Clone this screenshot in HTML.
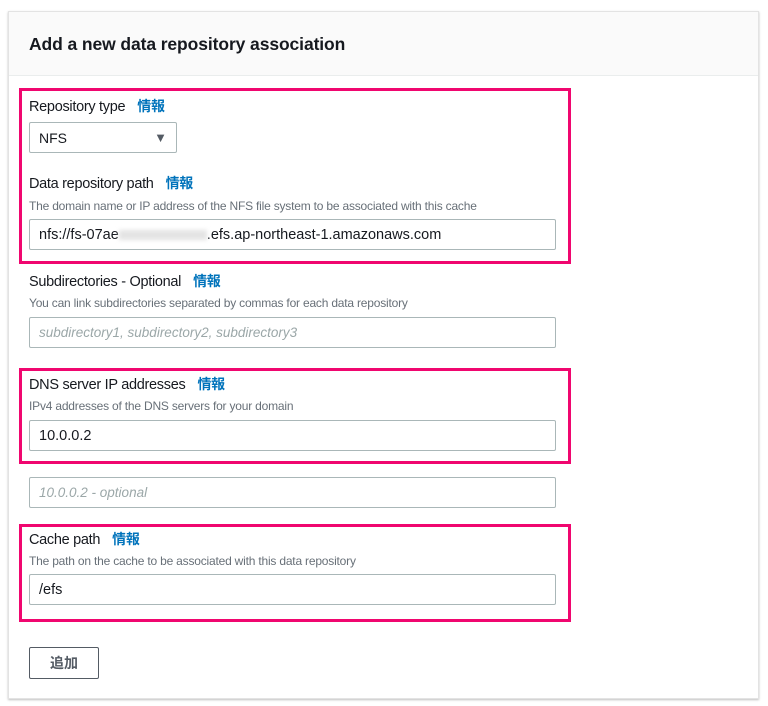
<!DOCTYPE html>
<html><head><meta charset="utf-8"><style>
*{box-sizing:border-box;margin:0;padding:0}
body{width:768px;height:706px;background:#fff;font-family:"Liberation Sans","Noto Sans CJK JP",sans-serif;color:#16191f;position:relative;overflow:hidden}
.card{position:absolute;left:8px;top:11px;width:751px;height:688px;background:#fff;border:1px solid #e3e3e3;box-shadow:0 1px 2px rgba(0,0,0,.25)}
.hdr{position:absolute;left:0;top:0;right:0;height:64px;background:#fafafa;border-bottom:1px solid #eaeded}
.hdr h1{position:absolute;left:20px;top:22px;font-size:17.5px;font-weight:bold;letter-spacing:-.1px}
.a{position:absolute}
.lbl{font-size:14.5px;letter-spacing:-.3px}
.lbl b{color:#0073bb;margin-left:12px;font-weight:bold;font-size:14px}
.desc{font-size:12px;color:#687078;letter-spacing:-.2px}
.inp{border:1px solid #aab7b8;border-radius:2px;height:31px;width:527px;font-size:14.5px;padding:7px 9px;background:#fff}
.ph{color:#9ba7a8;font-style:italic}
.pink{border:3px solid #f0066f}
</style></head><body>
<div class="card"><div class="hdr"><h1>Add a new data repository association</h1></div></div>
<div class="a pink" style="left:19px;top:88px;width:552px;height:176px"></div>
<div class="a pink" style="left:19px;top:368px;width:552px;height:96px"></div>
<div class="a pink" style="left:19px;top:524px;width:552px;height:98px"></div>

<div class="a lbl" style="left:29px;top:96px">Repository type<b>情報</b></div>
<div class="a inp" style="left:29px;top:122px;width:148px;font-size:14px">NFS<span style="position:absolute;right:9px;top:7px;font-size:13px;color:#545b64">▼</span></div>
<div class="a lbl" style="left:29px;top:173px">Data repository path<b>情報</b></div>
<div class="a desc" style="left:29px;top:199px">The domain name or IP address of the NFS file system to be associated with this cache</div>
<div class="a inp" style="left:29px;top:219px">nfs://fs-07ae<span style="display:inline-block;width:88px;height:10px;background:#e4e4e4;filter:blur(2px);vertical-align:middle"></span>.efs.ap-northeast-1.amazonaws.com</div>

<div class="a lbl" style="left:29px;top:271px">Subdirectories - Optional<b>情報</b></div>
<div class="a desc" style="left:29px;top:296px">You can link subdirectories separated by commas for each data repository</div>
<div class="a inp ph" style="left:29px;top:317px;font-size:13.5px">subdirectory1, subdirectory2, subdirectory3</div>

<div class="a lbl" style="left:29px;top:374px">DNS server IP addresses<b>情報</b></div>
<div class="a desc" style="left:29px;top:399px">IPv4 addresses of the DNS servers for your domain</div>
<div class="a inp" style="left:29px;top:420px">10.0.0.2</div>
<div class="a inp ph" style="left:29px;top:477px;font-size:13.5px">10.0.0.2 - optional</div>

<div class="a lbl" style="left:29px;top:529px">Cache path<b>情報</b></div>
<div class="a desc" style="left:29px;top:554px">The path on the cache to be associated with this data repository</div>
<div class="a inp" style="left:29px;top:574px">/efs</div>

<div class="a" style="left:29px;top:647px;width:70px;height:32px;border:1px solid #545b64;border-radius:2px;font-size:14px;font-weight:bold;text-align:center;line-height:30px;color:#545b64">追加</div>
</body></html>
